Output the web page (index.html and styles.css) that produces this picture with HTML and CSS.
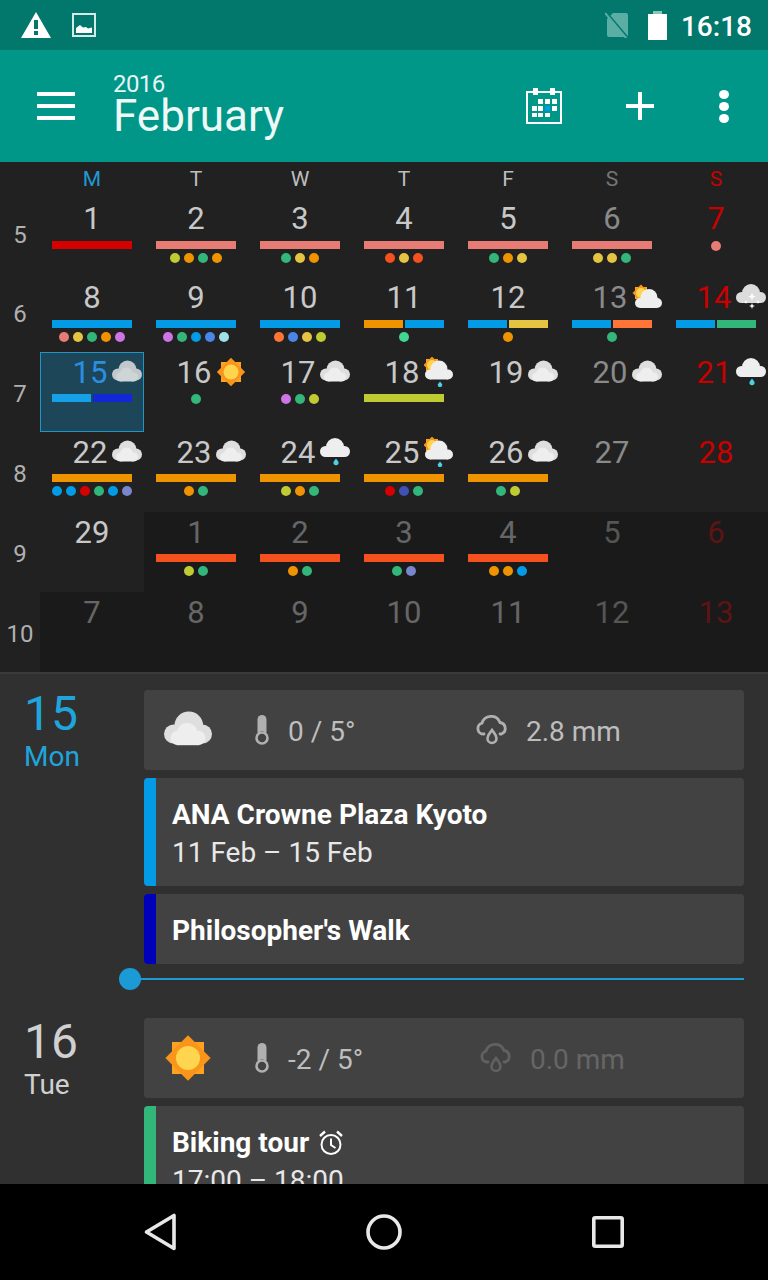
FILE: index.html
```html
<!DOCTYPE html>
<html lang="en">
<head>
<meta charset="utf-8">
<title>Calendar</title>
<link rel="stylesheet" href="styles.css">
</head>
<body>
<svg class="defs" width="0" height="0" aria-hidden="true">
  <symbol id="cloud" viewBox="0 0 30 30">
    <g fill="#dedede"><circle cx="15.500" cy="12.500" r="9"/><circle cx="6" cy="17.500" r="6"/><circle cx="24" cy="17.500" r="6"/><rect x="6" y="13" width="18" height="10.500"/></g>
    <g fill="#eeeeee"><circle cx="14.500" cy="17" r="6.500"/><circle cx="8.500" cy="20" r="4.500"/><circle cx="21.500" cy="20" r="4.500"/><rect x="8.500" y="17" width="13" height="7.500"/></g>
  </symbol>
  <symbol id="sun" viewBox="0 0 30 30">
    <rect x="5" y="5" width="20" height="20" fill="#ffa21f"/>
    <rect x="5" y="5" width="20" height="20" fill="#f9951a" transform="rotate(45 15 15)"/>
    <circle cx="15" cy="15" r="7.500" fill="#ffd54f"/>
  </symbol>
  <symbol id="rain" viewBox="0 0 30 30">
    <g fill="#eeeeee"><circle cx="15" cy="10" r="9"/><circle cx="5.500" cy="14.500" r="5.500"/><circle cx="24.500" cy="14.500" r="5.500"/><rect x="5.500" y="11" width="19" height="9"/></g>
    <path d="M16 21.500l2.400 3.200a2.600 2.600 0 1 1-4.800 0z" fill="#4dd0e1"/>
  </symbol>
  <symbol id="snow" viewBox="0 0 30 30">
    <g fill="#dcdcdc"><circle cx="15" cy="10" r="9"/><circle cx="5.500" cy="14.500" r="5.500"/><circle cx="24.500" cy="14.500" r="5.500"/><rect x="5.500" y="11" width="19" height="9"/></g>
    <path d="M16 9.500l1 3 3 1-3 1-1 3-1-3-3-1 3-1zM16 20l.8 2.200 2.200.8-2.200.8L16 26l-.8-2.200-2.200-.8 2.200-.8zM10 17l.6 1.400 1.400.6-1.400.6-.6 1.400-.6-1.400L8 19l1.400-.6zM22 17l.6 1.400 1.400.6-1.400.6-.6 1.400-.6-1.400L20 19l1.400-.6z" fill="#ffffff"/>
  </symbol>
  <symbol id="partly" viewBox="0 0 30 30">
    <rect x="3" y="4" width="12" height="12" fill="#ffa21f"/>
    <rect x="3" y="4" width="12" height="12" fill="#f9951a" transform="rotate(45 9 10)"/>
    <circle cx="9" cy="10" r="5" fill="#ffd54f"/>
    <g fill="#eeeeee"><circle cx="17" cy="14.500" r="8.500"/><circle cx="8" cy="20" r="5"/><circle cx="25" cy="20" r="5"/><rect x="8" y="16" width="17" height="9"/></g>
  </symbol>
  <symbol id="partlyrain" viewBox="0 0 30 30">
    <rect x="2" y="2" width="12" height="12" fill="#ffa21f"/>
    <rect x="2" y="2" width="12" height="12" fill="#f9951a" transform="rotate(45 8 8)"/>
    <circle cx="8" cy="8" r="5" fill="#ffd54f"/>
    <g fill="#eeeeee"><circle cx="15" cy="12" r="8.500"/><circle cx="6" cy="17.500" r="5"/><circle cx="24" cy="17.500" r="5"/><rect x="6" y="14" width="18" height="8.500"/></g>
    <path d="M16 24.500l2 2.600a2.200 2.200 0 1 1-4 0z" fill="#4dd0e1"/>
  </symbol>
  <symbol id="therm" viewBox="0 0 16 32">
    <rect x="3.500" y="1" width="9" height="21" rx="4.500" fill="#b0b0b0"/>
    <rect x="6.500" y="17" width="3" height="5" fill="#424242"/>
    <circle cx="8" cy="24" r="5.500" fill="#424242" stroke="#b0b0b0" stroke-width="2.600"/>
  </symbol>
  <symbol id="raincloud" viewBox="0 0 32 30">
    <path d="M8 19H7A5.500 5.500 0 0 1 6 8.200 9.500 9.500 0 0 1 24 7.500 6 6 0 0 1 25.500 19H24" fill="none" stroke="currentColor" stroke-width="2.800" stroke-linecap="round"/>
    <path d="M16 15c-2 3-4.500 5-4.500 8.500a4.500 4.500 0 0 0 9 0C20.500 20 18 18 16 15z" fill="none" stroke="currentColor" stroke-width="2.600"/>
  </symbol>
</svg>

<div class="status">
  <svg class="st-warn" viewBox="0 0 30 26"><path d="M15 0L30 26H0z" fill="#fff"/><rect x="13" y="8" width="4" height="9" fill="#02776b"/><rect x="13" y="19" width="4" height="4" fill="#02776b"/></svg>
  <svg class="st-img" viewBox="0 0 24 24"><rect x="1" y="1" width="22" height="22" fill="none" stroke="#d5ebe8" stroke-width="2"/><path d="M4 20v-5l4-3 3 2.500 3-.5 2 1.500 4-1V20z" fill="#fff"/></svg>
  <svg class="st-sim" viewBox="0 0 24 26"><path d="M8 1h13a2 2 0 0 1 2 2v21a1 1 0 0 1-1 1H4a2 2 0 0 1-2-2V7z" fill="#5aaea4"/><path d="M1 0L23 26" stroke="#02776b" stroke-width="2"/><path d="M0 1L22 27" stroke="#5aaea4" stroke-width="2"/></svg>
  <svg class="st-bat" viewBox="0 0 19 29"><rect x="5" y="0" width="9" height="4" fill="#8fc4bd"/><rect x="0" y="3" width="19" height="26" fill="#fff"/></svg>
  <span class="st-time">16:18</span>
</div>

<header class="toolbar">
  <div class="burger"><i></i><i></i><i></i></div>
  <div class="title"><div class="year">2016</div><div class="month">February</div></div>
  <svg class="tb-cal" viewBox="0 0 36 36">
    <rect x="1" y="4" width="34" height="31" fill="none" stroke="#fff" stroke-width="2"/>
    <rect x="7" y="0" width="5" height="7" fill="#fff"/><rect x="24" y="0" width="5" height="7" fill="#fff"/>
    <g fill="#fff">
      <rect x="12" y="11" width="5" height="5"/><rect x="19" y="11" width="5" height="5"/><rect x="26" y="11" width="5" height="5"/>
      <rect x="6" y="18" width="5" height="5"/><rect x="12" y="18" width="5" height="5"/><rect x="26" y="18" width="5" height="5"/>
      <rect x="6" y="25" width="5" height="4"/><rect x="12" y="25" width="5" height="4"/><rect x="19" y="25" width="5" height="4"/>
    </g>
    <rect x="19" y="18" width="5" height="5" fill="#039be5"/>
  </svg>
  <svg class="tb-plus" viewBox="0 0 28 28"><path d="M12 0h4v12h12v4H16v12h-4V16H0v-4h12z" fill="#fff"/></svg>
  <div class="kebab"><i></i><i></i><i></i></div>
</header>

<section class="cal">
  <div class="row head">
    <div></div>
    <div class="hd today">M</div><div class="hd">T</div><div class="hd">W</div><div class="hd">T</div><div class="hd">F</div><div class="hd sat">S</div><div class="hd sun">S</div>
  </div>

  <div class="row r1">
    <div class="wk">5</div>
    <div class="cell"><div class="num">1</div><div class="bars"><i class="red"></i></div></div>
    <div class="cell"><div class="num">2</div><div class="bars"><i class="salmon"></i></div><div class="dots"><i class="olive"></i><i class="orange"></i><i class="green"></i><i class="orange"></i></div></div>
    <div class="cell"><div class="num">3</div><div class="bars"><i class="salmon"></i></div><div class="dots"><i class="green"></i><i class="yellow"></i><i class="orange"></i></div></div>
    <div class="cell"><div class="num">4</div><div class="bars"><i class="salmon"></i></div><div class="dots"><i class="tomato"></i><i class="yellow"></i><i class="tomato"></i></div></div>
    <div class="cell"><div class="num">5</div><div class="bars"><i class="salmon"></i></div><div class="dots"><i class="green"></i><i class="orange"></i><i class="yellow"></i></div></div>
    <div class="cell sat"><div class="num">6</div><div class="bars"><i class="salmon"></i></div><div class="dots"><i class="yellow"></i><i class="yellow"></i><i class="green"></i></div></div>
    <div class="cell sun"><div class="num">7</div><div class="dots"><i class="salmon"></i></div></div>
  </div>

  <div class="row r2">
    <div class="wk">6</div>
    <div class="cell"><div class="num">8</div><div class="bars"><i class="blue"></i></div><div class="dots"><i class="salmon"></i><i class="yellow"></i><i class="green"></i><i class="orange"></i><i class="purple"></i></div></div>
    <div class="cell"><div class="num">9</div><div class="bars"><i class="blue"></i></div><div class="dots"><i class="purple"></i><i class="green"></i><i class="blue"></i><i class="peri"></i><i class="cyan"></i></div></div>
    <div class="cell"><div class="num">10</div><div class="bars"><i class="blue"></i></div><div class="dots"><i class="coral"></i><i class="peri"></i><i class="yellow"></i><i class="olive"></i></div></div>
    <div class="cell"><div class="num">11</div><div class="bars"><i class="orange"></i><i class="blue"></i></div><div class="dots"><i class="mint"></i></div></div>
    <div class="cell"><div class="num">12</div><div class="bars"><i class="blue"></i><i class="yellow"></i></div><div class="dots"><i class="orange"></i></div></div>
    <div class="cell sat wx"><div class="num">13</div><svg class="ico"><use href="#partly"/></svg><div class="bars"><i class="blue"></i><i class="coral"></i></div><div class="dots"><i class="green"></i></div></div>
    <div class="cell sun wx"><div class="num">14</div><svg class="ico"><use href="#snow"/></svg><div class="bars"><i class="blue"></i><i class="green"></i></div></div>
  </div>

  <div class="row">
    <div class="wk">7</div>
    <div class="cell wx selected"><div class="num">15</div><svg class="ico"><use href="#cloud"/></svg><div class="bars"><i class="blue"></i><i class="navy"></i></div></div>
    <div class="cell wx"><div class="num">16</div><svg class="ico"><use href="#sun"/></svg><div class="dots"><i class="green"></i></div></div>
    <div class="cell wx"><div class="num">17</div><svg class="ico"><use href="#cloud"/></svg><div class="dots"><i class="purple"></i><i class="green"></i><i class="olive"></i></div></div>
    <div class="cell wx"><div class="num">18</div><svg class="ico"><use href="#partlyrain"/></svg><div class="bars"><i class="olive"></i></div></div>
    <div class="cell wx"><div class="num">19</div><svg class="ico"><use href="#cloud"/></svg></div>
    <div class="cell sat wx"><div class="num">20</div><svg class="ico"><use href="#cloud"/></svg></div>
    <div class="cell sun wx"><div class="num">21</div><svg class="ico"><use href="#rain"/></svg></div>
  </div>

  <div class="row">
    <div class="wk">8</div>
    <div class="cell wx"><div class="num">22</div><svg class="ico"><use href="#cloud"/></svg><div class="bars"><i class="orange"></i></div><div class="dots"><i class="blue"></i><i class="blue"></i><i class="red"></i><i class="green"></i><i class="blue"></i><i class="indigo"></i></div></div>
    <div class="cell wx"><div class="num">23</div><svg class="ico"><use href="#cloud"/></svg><div class="bars"><i class="orange"></i></div><div class="dots"><i class="orange"></i><i class="green"></i></div></div>
    <div class="cell wx"><div class="num">24</div><svg class="ico"><use href="#rain"/></svg><div class="bars"><i class="orange"></i></div><div class="dots"><i class="olive"></i><i class="orange"></i><i class="green"></i></div></div>
    <div class="cell wx"><div class="num">25</div><svg class="ico"><use href="#partlyrain"/></svg><div class="bars"><i class="orange"></i></div><div class="dots"><i class="red"></i><i class="deep"></i><i class="green"></i></div></div>
    <div class="cell wx"><div class="num">26</div><svg class="ico"><use href="#cloud"/></svg><div class="bars"><i class="orange"></i></div><div class="dots"><i class="green"></i><i class="olive"></i></div></div>
    <div class="cell sat"><div class="num">27</div></div>
    <div class="cell sun"><div class="num">28</div></div>
  </div>

  <div class="row">
    <div class="wk">9</div>
    <div class="cell"><div class="num">29</div></div>
    <div class="cell other"><div class="num">1</div><div class="bars"><i class="tomato"></i></div><div class="dots"><i class="olive"></i><i class="green"></i></div></div>
    <div class="cell other"><div class="num">2</div><div class="bars"><i class="tomato"></i></div><div class="dots"><i class="orange"></i><i class="green"></i></div></div>
    <div class="cell other"><div class="num">3</div><div class="bars"><i class="tomato"></i></div><div class="dots"><i class="green"></i><i class="indigo"></i></div></div>
    <div class="cell other"><div class="num">4</div><div class="bars"><i class="tomato"></i></div><div class="dots"><i class="orange"></i><i class="orange"></i><i class="blue"></i></div></div>
    <div class="cell other sat"><div class="num">5</div></div>
    <div class="cell other sun"><div class="num">6</div></div>
  </div>

  <div class="row">
    <div class="wk">10</div>
    <div class="cell other"><div class="num">7</div></div>
    <div class="cell other"><div class="num">8</div></div>
    <div class="cell other"><div class="num">9</div></div>
    <div class="cell other"><div class="num">10</div></div>
    <div class="cell other"><div class="num">11</div></div>
    <div class="cell other sat"><div class="num">12</div></div>
    <div class="cell other sun"><div class="num">13</div></div>
  </div>
</section>

<main class="agenda">
  <section class="day">
    <div class="date today-date"><div class="d-num">15</div><div class="d-name">Mon</div></div>
    <div class="cards">
      <div class="card weather">
        <svg class="w-big"><use href="#cloud"/></svg>
        <svg class="w-therm"><use href="#therm"/></svg>
        <span class="w-temp">0 / 5°</span>
        <svg class="w-rain"><use href="#raincloud"/></svg>
        <span class="w-mm">2.8 mm</span>
      </div>
      <div class="card event"><i class="strip blue"></i><div class="ev-body"><div class="ev-title">ANA Crowne Plaza Kyoto</div><div class="ev-sub">11 Feb – 15 Feb</div></div></div>
      <div class="card event"><i class="strip deepnavy"></i><div class="ev-body"><div class="ev-title">Philosopher's Walk</div></div></div>
    </div>
  </section>
  <div class="now"><i class="now-dot"></i><i class="now-line"></i></div>
  <section class="day">
    <div class="date"><div class="d-num">16</div><div class="d-name">Tue</div></div>
    <div class="cards">
      <div class="card weather">
        <svg class="w-big"><use href="#sun"/></svg>
        <svg class="w-therm"><use href="#therm"/></svg>
        <span class="w-temp neg">-2 / 5°</span>
        <svg class="w-rain dim"><use href="#raincloud"/></svg>
        <span class="w-mm dim">0.0 mm</span>
      </div>
      <div class="card event"><i class="strip green"></i><div class="ev-body"><div class="ev-title">Biking tour
        <svg class="alarm" viewBox="0 0 24 26"><circle cx="12" cy="14.500" r="9.500" fill="none" stroke="#fff" stroke-width="2"/><path d="M12 8.500v6.500l4.500 3" fill="none" stroke="#fff" stroke-width="2"/><path d="M1 6l5-4.500M23 6l-5-4.500" stroke="#fff" stroke-width="2.400"/></svg></div><div class="ev-sub">17:00 – 18:00</div></div></div>
    </div>
  </section>
</main>

<nav class="navbar">
  <svg class="nav-back" viewBox="0 0 32 38"><path d="M30 2.500V35.500L2.500 19z" fill="none" stroke="#e8e8e8" stroke-width="3.600" stroke-linejoin="round"/></svg>
  <svg class="nav-home" viewBox="0 0 36 36"><circle cx="18" cy="18" r="16" fill="none" stroke="#e8e8e8" stroke-width="3.600"/></svg>
  <svg class="nav-recent" viewBox="0 0 32 32"><rect x="1.800" y="1.800" width="28.400" height="28.400" rx="1.500" fill="none" stroke="#e8e8e8" stroke-width="3.600"/></svg>
</nav>
</body>
</html>
```
FILE: styles.css
```css
* { box-sizing: border-box; }
html, body { margin: 0; padding: 0; }
body {
  width: 768px;
  height: 1280px;
  overflow: hidden;
  display: flex;
  flex-direction: column;
  font-family: Roboto, "Liberation Sans", sans-serif;
  background: #303030;
  color: #fff;
}
i { display: block; }
.defs { position: absolute; }

/* status bar */
.status {
  height: 50px;
  flex: none;
  background: #02776b;
  display: flex;
  align-items: center;
  padding: 0 16px 0 21px;
}
.st-warn { width: 30px; height: 26px; }
.st-img { width: 24px; height: 24px; margin-left: 21px; }
.st-sim { width: 24px; height: 26px; margin-left: auto; }
.st-bat { width: 19px; height: 29px; margin-left: 19px; }
.st-time { font-size: 28px; font-weight: 500; margin-left: 14px; line-height: 54px; height: 50px; }

/* toolbar */
.toolbar {
  height: 112px;
  flex: none;
  background: #009688;
  display: flex;
  align-items: center;
  padding: 0 39px 0 37px;
}
.burger { width: 38px; display: flex; flex-direction: column; gap: 8px; }
.burger i { height: 4px; background: #fff; }
.title { margin: -4px 0 0 38px; flex: 1; }
.year { font-size: 24px; line-height: 24px; letter-spacing: -0.6px; color: #e6f4f2; }
.month { font-size: 44px; line-height: 40px; color: #eef8f6; }
.tb-cal { width: 36px; height: 36px; }
.tb-plus { width: 28px; height: 28px; margin-left: 64px; }
.kebab { width: 10px; margin-left: 65px; display: flex; flex-direction: column; gap: 3px; }
.kebab i { height: 9px; border-radius: 50%; background: #fff; }

/* month grid */
.cal { flex: none; height: 510px; background: #212121; }
.row {
  display: grid;
  grid-template-columns: 40px repeat(7, 104px);
  height: 80px;
  --shift: 0px;
}
.row.head { height: 30px; }
.r1 { --shift: 7px; }
.r2 { --shift: 6px; }
.hd { font-size: 21px; line-height: 34px; text-align: center; color: #bdbdbd; }
.hd.today { color: #1f9bd1; }
.hd.sat { color: #757575; }
.hd.sun { color: #c80000; }
.wk {
  font-size: 24px;
  color: #b0b0b0;
  display: flex;
  align-items: center;
  justify-content: center;
  padding-top: 4px;
}
.r1 .wk { padding-top: 6px; }
.cell {
  position: relative;
  padding-top: var(--shift);
  display: flex;
  flex-direction: column;
  align-items: center;
  color: #c8c8c8;
}
.cell.sat { color: #8a8a8a; }
.cell.sun { color: #c80000; }
.cell.other { background: #1a1a1a; color: #666666; }
.cell.other.sat { color: #555555; }
.cell.other.sun { color: #5e1414; }
.cell.selected { background: #1d4659; box-shadow: inset 0 0 0 1px #2196c4; color: #2a8fe0; }
.num { font-size: 31px; line-height: 42px; height: 40px; margin-bottom: 2px; }
.r1 .num, .r2 .num { line-height: 40px; }
.wx .num { margin-right: 4px; }
.ico { position: absolute; left: 72px; top: calc(5px + var(--shift)); width: 30px; height: 30px; }
.selected .ico { opacity: 0.85; }
.bars { display: flex; gap: 2px; width: 80px; height: 8px; }
.bars i { flex: 1; }
.dots { display: flex; justify-content: center; gap: 4px; height: 10px; }
.bars + .dots { margin-top: 4px; }
.dots i { width: 10px; height: 10px; border-radius: 50%; }

.red { background: #d50000; }
.salmon { background: #e67c73; }
.blue { background: #039be5; }
.orange { background: #f09300; }
.tomato { background: #f4511e; }
.coral { background: #ff7537; }
.green { background: #33b679; }
.mint { background: #42d692; }
.yellow { background: #e4c441; }
.olive { background: #c0ca33; }
.purple { background: #cd74e6; }
.peri { background: #4a86e8; }
.cyan { background: #9fe1e7; }
.indigo { background: #7986cb; }
.deep { background: #3f51b5; }
.navy { background: #1228d8; }
.deepnavy { background: #0000b8; }
.selected .blue { background: #16a0e8; }

/* agenda */
.agenda {
  flex: 1;
  min-height: 0;
  overflow: hidden;
  background: #303030;
  border-top: 2px solid #3b3b3b;
  padding: 16px 24px 0 0;
}
.day { display: flex; }
.date { width: 144px; flex: none; padding-left: 24px; color: #d0d0d0; }
.today-date { color: #1fa5dc; }
.d-num { font-size: 48px; line-height: 48px; }
.d-name { font-size: 28px; line-height: 38px; }
.cards { flex: 1; display: flex; flex-direction: column; gap: 8px; }
.card { background: #424242; border-radius: 4px; overflow: hidden; }
.weather { height: 80px; display: flex; align-items: center; padding-left: 20px; color: #bdbdbd; font-size: 28px; }
.w-big { width: 48px; height: 48px; flex: none; }
.w-therm { width: 16px; height: 32px; margin-left: 42px; flex: none; }
.w-temp { width: 188px; margin-left: 18px; flex: none; padding-top: 2px; }
.w-temp.neg { width: 192px; }
.w-rain { width: 32px; height: 30px; flex: none; color: #b0b0b0; }
.w-mm { margin-left: 18px; padding-top: 2px; }
.w-rain.dim { color: #616161; }
.w-mm.dim { color: #666666; }
.event { display: flex; }
.strip { width: 12px; flex: none; }
.ev-body { padding: 18px 16px 14px; }
.ev-title { font-size: 28px; line-height: 38px; font-weight: 700; display: flex; align-items: center; gap: 10px; }
.ev-sub { font-size: 28px; line-height: 38px; color: #e8e8e8; }
.alarm { width: 24px; height: 26px; }
.now { display: flex; align-items: center; height: 22px; margin: 4px 0 28px 119px; }
.now-dot { width: 22px; height: 22px; border-radius: 50%; background: #1c9ad6; flex: none; }
.now-line { flex: 1; height: 2px; background: #1c9ad6; margin-left: -2px; }

/* nav bar */
.navbar {
  height: 96px;
  flex: none;
  background: #000;
  display: flex;
  align-items: center;
  padding: 0 144px;
  justify-content: space-between;
}
.nav-back { width: 32px; height: 38px; }
.nav-home { width: 36px; height: 36px; }
.nav-recent { width: 32px; height: 32px; }
```
